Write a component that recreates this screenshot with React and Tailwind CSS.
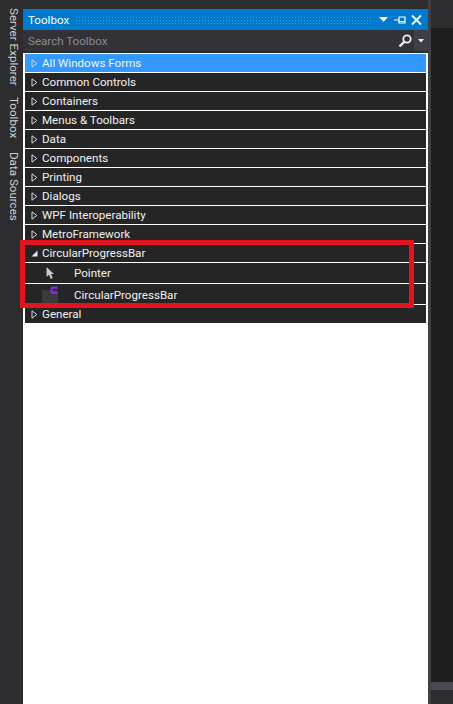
const FONT = "font-['Roboto',sans-serif]";

function Arrow({ open }) {
  return (
    <svg width="7" height="9" viewBox="0 0 7 9" className="shrink-0">
      {open ? (
        <path d="M6.5 1.5V7.5H0.5Z" fill="#e8e8e8" />
      ) : (
        <path d="M1 0.8L5.8 4.5L1 8.2Z" fill="none" stroke="#d8d8d8" strokeWidth="1" />
      )}
    </svg>
  );
}

function Header({ label, open, active }) {
  return (
    <div className={`h-[18px] mt-px flex items-center pl-[6px] gap-[4px] ${active ? "bg-[#3399ff]" : "bg-[#252526]"}`}>
      <span className="w-[7px] flex justify-center"><Arrow open={open} /></span>
      <span className="text-[11.6px] leading-[18px] text-[#f1f1f1] whitespace-nowrap">{label}</span>
    </div>
  );
}

function Item({ label, children, h, text }) {
  return (
    <div className={`mt-px flex items-center bg-[#252526] ${h}`}>
      <span className="w-[49px] flex justify-center pl-[1px]">{children}</span>
      <span className={`text-[11.6px] leading-[16px] text-[#f1f1f1] whitespace-nowrap ${text}`}>{label}</span>
    </div>
  );
}

function SideTab({ label, h }) {
  return (
    <div className={`${h} [writing-mode:vertical-rl] text-[11.6px] leading-[22px] text-[#d0d0d0] whitespace-nowrap`}>
      {label}
    </div>
  );
}

export default function App() {
  const groups = ["Common Controls", "Containers", "Menus & Toolbars", "Data", "Components", "Printing", "Dialogs", "WPF Interoperability", "MetroFramework"];
  return (
    <div className={`relative w-[453px] h-[704px] overflow-hidden bg-[#2d2d30] flex ${FONT}`}>
      <div className="w-[23px] shrink-0 pt-[8px] pl-[4px] flex flex-col items-center">
        <SideTab label="Server Explorer" h="h-[89px]" />
        <SideTab label="Toolbox" h="h-[55px]" />
        <SideTab label="Data Sources" h="h-[70px]" />
      </div>

      <div className="w-[405px] shrink-0 pt-[9px] flex flex-col">
        <div className="h-[21px] bg-[#007acc] flex items-center pl-[5px] pr-[1px]">
          <span className="text-[11.6px] text-white leading-[16px] mt-px">Toolbox</span>
          <div className="flex-1 h-[8px] mx-[6px] bg-[radial-gradient(#3a9ad8_0.7px,transparent_0.8px)] bg-[length:3px_3px]" />
          <svg width="48" height="14" viewBox="0 0 48 14" className="shrink-0">
            <path d="M0 4H9L4.5 9Z" fill="#fff" />
            <path d="M15 7H20M20 3.5V10.5M20 4H26V10H20M20 8.5H26" fill="none" stroke="#fff" strokeWidth="1.2" />
            <path d="M33 2.5L42 11.5M42 2.5L33 11.5" stroke="#e8f4ff" strokeWidth="2" />
          </svg>
        </div>
        <div className="h-[21px] bg-[#333337] flex items-center pl-[5px]">
          <span className="text-[11.6px] leading-[16px] mt-px text-[#8a8a8a] flex-1">Search Toolbox</span>
          <svg width="16" height="16" viewBox="0 0 16 16" className="shrink-0 mr-[1px]">
            <circle cx="10" cy="6" r="3.7" fill="none" stroke="#f1f1f1" strokeWidth="1.8" />
            <path d="M7.2 8.8L2.5 13.5" stroke="#f1f1f1" strokeWidth="2.4" />
          </svg>
          <span className="w-[14px] h-[21px] bg-[#3f3f46] flex items-center justify-center">
            <svg width="6" height="4" viewBox="0 0 6 4"><path d="M0 0H6L3 3.5Z" fill="#f1f1f1" /></svg>
          </span>
        </div>
        <div className="flex-1 bg-white mt-[2px] px-[2px]">
          <div className="bg-white">
            <Header label="All Windows Forms" active />
            {groups.map((g) => <Header key={g} label={g} />)}
            <Header label="CircularProgressBar" open />
            <Item label="Pointer" h="h-[20px]" text="mb-px">
              <svg width="10" height="14" viewBox="0 0 10 14">
                <path d="M1.5 1V11L4 8.8L5.8 13L7.8 12L6 8H9Z" fill="#c8c8c8" />
              </svg>
            </Item>
            <Item label="CircularProgressBar" h="h-[20px]" text="mt-px">
              <svg width="18" height="18" viewBox="0 0 18 18" className="ml-[2px]">
                <rect x="0" y="5" width="16" height="13" fill="#3a3a3d" />
                <path d="M15.5 2.6H11.2Q9.4 2.6 9.4 4.4V6Q9.4 7.8 11.2 7.8H15.5" fill="none" stroke="#8a2be2" strokeWidth="2.2" />
              </svg>
            </Item>
            <Header label="General" />
          </div>
        </div>
      </div>

      <div className="flex-1 flex">
        <div className="w-[3px] bg-[#3f3f46]" />
        <div className="flex-1 pt-[28px] flex flex-col">
          <div className="flex-1 bg-[#1e1e1e]" />
          <div className="h-[8px] bg-[#4a4a50]" />
          <div className="h-[14px] bg-[#2d2d30]" />
        </div>
      </div>

      <div className="absolute left-[20px] top-[240px] w-[394px] h-[68px] border-[5px] border-[#e3141f]" />
    </div>
  );
}
